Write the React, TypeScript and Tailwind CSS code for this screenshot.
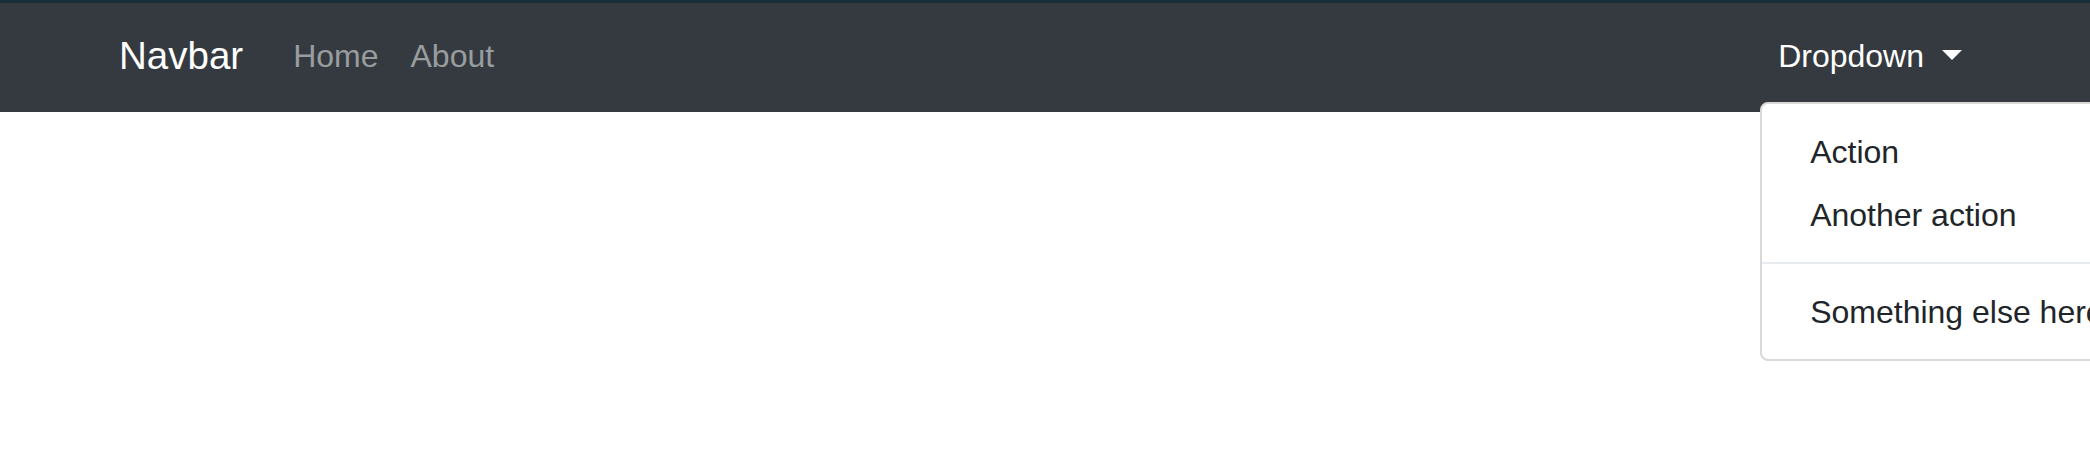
export default function App() {
  return (
    <div className="relative w-full h-[454px] overflow-hidden bg-white font-['Liberation_Sans',Arial,sans-serif]">
      {/* Navbar */}
      <nav className="h-[112px] bg-[#343a40] border-t-[3px] border-[#1b2c3b] flex items-center justify-between pl-[119px] pr-[112px]">
        <div className="flex items-center">
          <a className="text-[38.5px] leading-[60px] text-white mr-[34px] -mt-[3px]">Navbar</a>
          <a className="px-[16px] text-[32px] leading-[48px] text-[#9a9d9f] -mt-[3px]">Home</a>
          <a className="px-[16px] text-[32px] leading-[48px] text-[#9a9d9f] -mt-[3px]">About</a>
        </div>

        {/* Dropdown */}
        <div className="relative -mt-[3px]">
          <button className="flex items-center px-[16px] py-[8px] text-[32px] leading-[48px] text-white">
            Dropdown
            <span className="ml-[18px] -mt-[2px] w-0 h-0 border-t-[10px] border-x-[10px] border-t-white border-x-transparent" />
          </button>
          <div className="absolute left-[-2px] top-[calc(100%+14px)] w-[420px] bg-white border-2 border-[#d9d9d9] rounded-[8px] py-[16px] text-[32px] leading-[48px] text-[#212529] whitespace-nowrap">
            <div className="h-[63px] flex items-center px-[48px]">Action</div>
            <div className="h-[63px] flex items-center px-[48px]">Another action</div>
            <div className="my-[16px] border-t-2 border-[#e9ecef]" />
            <div className="h-[63px] flex items-center px-[48px]">Something else here</div>
          </div>
        </div>
      </nav>
    </div>
  );
}
